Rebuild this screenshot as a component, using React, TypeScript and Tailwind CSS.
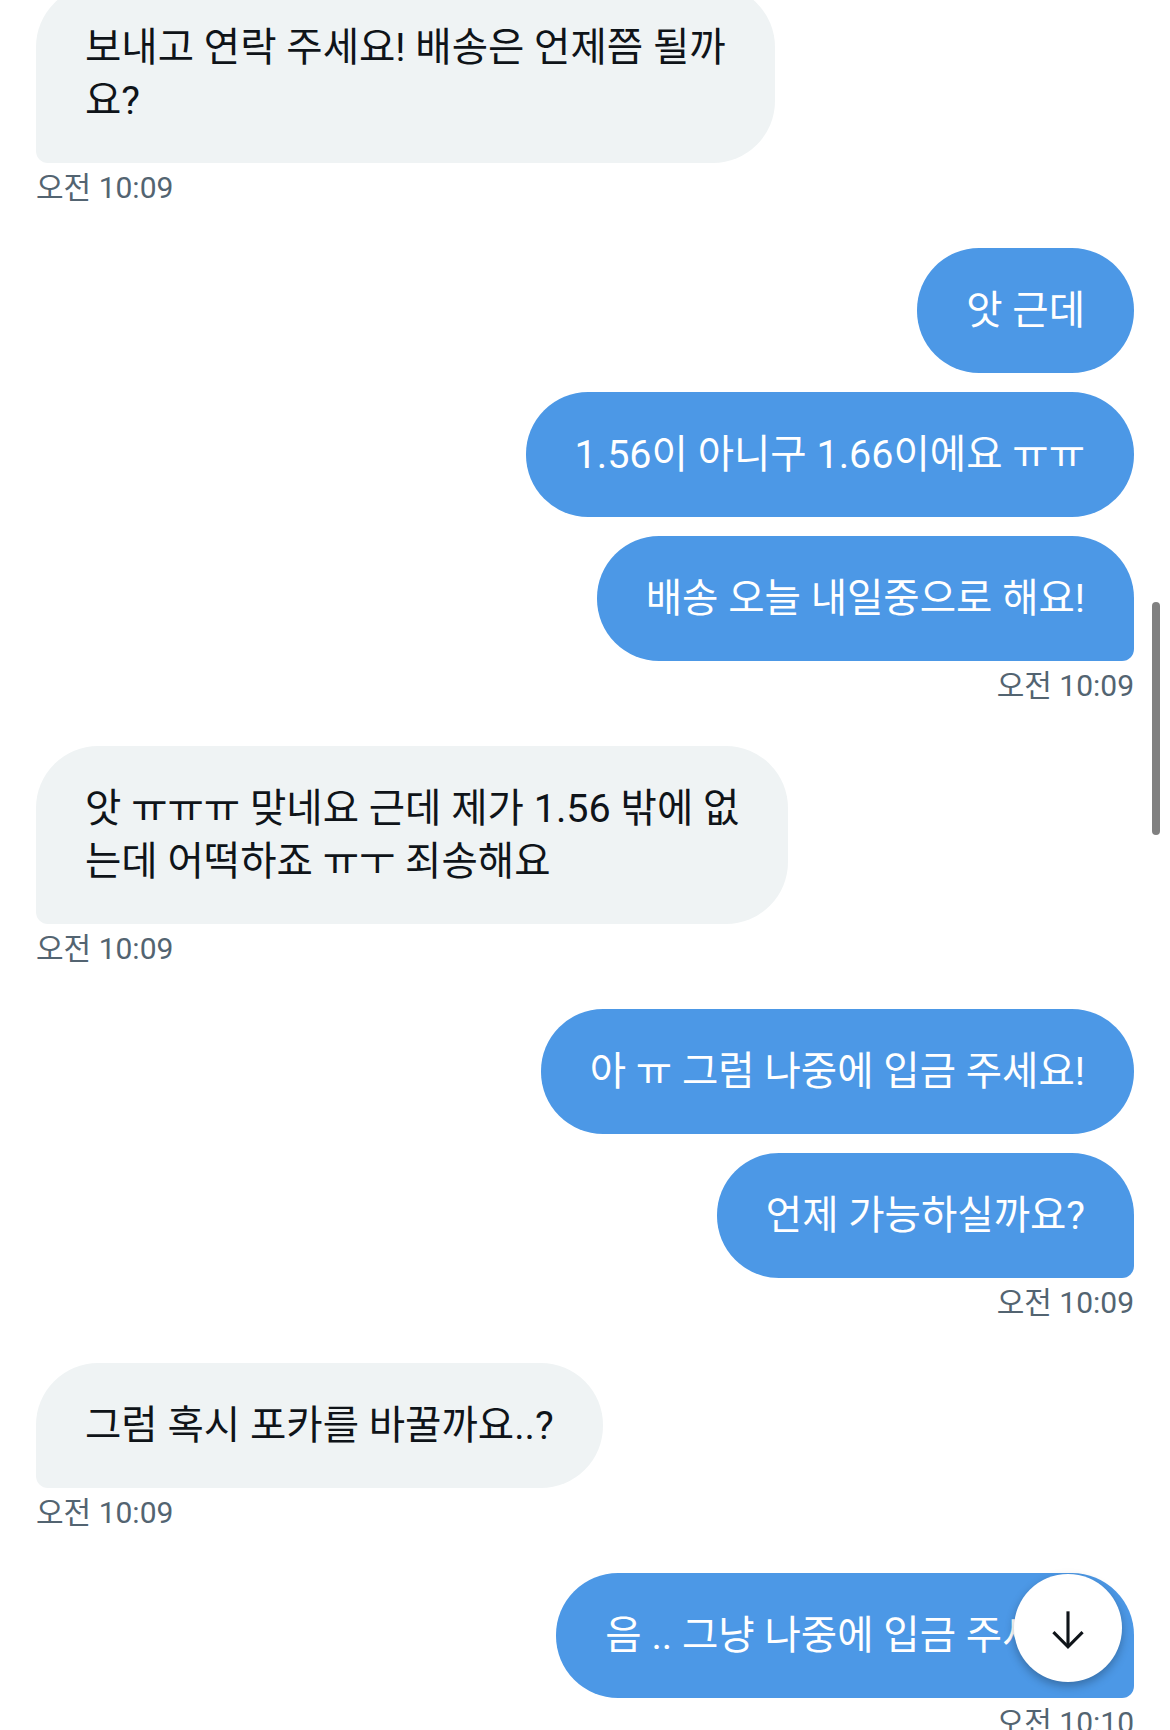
import React from "react";

type Msg = { lines: string[]; tail?: boolean };

const font = {
  fontFamily: 'Roboto, "Noto Sans CJK KR", sans-serif',
};

function Received({ lines, tail }: Msg) {
  return (
    <div className="flex justify-start">
      <div
        className={`bg-[#eff3f4] text-[#0f1419] px-[49px] py-[36px] text-[39.5px] leading-[53px] whitespace-nowrap rounded-[62px] ${
          tail ? "rounded-bl-[12px]" : ""
        }`}
      >
        {lines.map((l, i) => (
          <div key={i}>{l}</div>
        ))}
      </div>
    </div>
  );
}

function Sent({ lines, tail }: Msg) {
  return (
    <div className="flex justify-end">
      <div
        className={`bg-[#4c98e6] text-white px-[49px] py-[36px] text-[39.5px] leading-[53px] whitespace-nowrap rounded-[62px] ${
          tail ? "rounded-br-[12px]" : ""
        }`}
      >
        {lines.map((l, i) => (
          <div key={i}>{l}</div>
        ))}
      </div>
    </div>
  );
}

function Time({ t, right }: { t: string; right?: boolean }) {
  return (
    <div
      className={`mt-[8px] h-[34px] leading-[34px] text-[30px] text-[#536471] ${
        right ? "text-right" : "text-left"
      }`}
    >
      {t}
    </div>
  );
}

export default function App() {
  return (
    <div
      className="relative h-[1730px] w-[1170px] overflow-hidden bg-white"
      style={font}
    >
      <div className="flex flex-col px-[36px] mt-[-15px]">
        {/* group 1 */}
        <div className="flex flex-col">
          <Received
            lines={["보내고 연락 주세요! 배송은 언제쯤 될까", "요?"]}
            tail
          />
          <Time t="오전 10:09" />
        </div>

        {/* group 2 */}
        <div className="mt-[43px] flex flex-col gap-[19px]">
          <Sent lines={["앗 근데"]} />
          <Sent lines={["1.56이 아니구 1.66이에요 ㅠㅠ"]} />
          <Sent lines={["배송 오늘 내일중으로 해요!"]} tail />
        </div>
        <Time t="오전 10:09" right />

        {/* group 3 */}
        <div className="mt-[43px] flex flex-col">
          <Received
            lines={["앗 ㅠㅠㅠ 맞네요 근데 제가 1.56 밖에 없", "는데 어떡하죠 ㅠㅜ 죄송해요"]}
            tail
          />
          <Time t="오전 10:09" />
        </div>

        {/* group 4 */}
        <div className="mt-[43px] flex flex-col gap-[19px]">
          <Sent lines={["아 ㅠ 그럼 나중에 입금 주세요!"]} />
          <Sent lines={["언제 가능하실까요?"]} tail />
        </div>
        <Time t="오전 10:09" right />

        {/* group 5 */}
        <div className="mt-[43px] flex flex-col">
          <Received lines={["그럼 혹시 포카를 바꿀까요..?"]} tail />
          <Time t="오전 10:09" />
        </div>

        {/* group 6 */}
        <div className="mt-[43px] flex flex-col">
          <Sent lines={["음 .. 그냥 나중에 입금 주세요!"]} tail />
        </div>
        <Time t="오전 10:10" right />
      </div>

      {/* scrollbar */}
      <div className="absolute left-[1152px] top-[602px] h-[233px] w-[8px] rounded-full bg-[#808080]" />

      {/* scroll to bottom button */}
      <div className="absolute left-[1014px] top-[1574px] flex h-[108px] w-[108px] items-center justify-center rounded-full bg-white shadow-[0_4px_10px_rgba(0,0,0,0.28)]">
        <svg
          width="50"
          height="50"
          viewBox="0 0 24 24"
          fill="none"
          stroke="#0f1419"
          strokeWidth="1.5"
          strokeLinecap="butt"
          strokeLinejoin="miter"
        >
          <path d="M12 4v17" />
          <path d="M5 14l7 7 7-7" />
        </svg>
      </div>
    </div>
  );
}
